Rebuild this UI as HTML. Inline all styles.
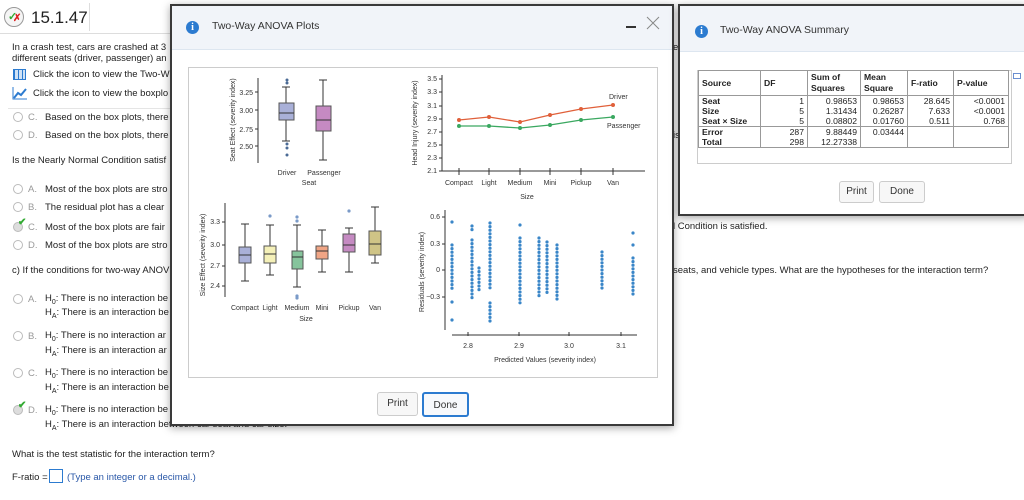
<!DOCTYPE html>
<html><head><meta charset="utf-8"><style>
*{margin:0;padding:0;box-sizing:border-box}
body{width:1024px;height:500px;overflow:hidden;background:#fff;font-family:"Liberation Sans",Arial,sans-serif;color:#222;position:relative}
.t{position:absolute;font-size:9.5px;white-space:nowrap;line-height:11px}
.r{position:absolute;width:10px;height:10px;border:1px solid #bbb;border-radius:50%;background:#fff}
.l{position:absolute;font-size:9.5px;color:#999;line-height:11px}
.dlg{position:absolute;background:#fff;border:2px solid #3a3a3a;box-shadow:0 2px 8px rgba(0,0,0,.35)}
.hd{position:absolute;left:0;right:0;top:0;background:#f1f4f9;border-bottom:1px solid #dde6f0}
.ic{position:absolute;width:13px;height:13px;border-radius:50%;background:#2c7bd0;color:#fff;font:bold 10px "Liberation Serif",serif;text-align:center;line-height:13px}
.btn{position:absolute;border:1px solid #ccc;border-radius:3px;background:#f7f7f7;font-size:10px;text-align:center;color:#333}
table{border-collapse:collapse;font-size:8.6px}
td{padding:0 3px;height:10.4px;border-left:1px solid #999;border-right:1px solid #999;line-height:10px}
sub{font-size:7px}
</style></head><body>
<div style="position:absolute;left:4px;top:7px;width:20px;height:20px;border:1px solid #999;border-radius:50%;background:#f5f5f5"></div>
<div style="position:absolute;left:8px;top:10px;font-size:11px;color:#3a3;font-weight:bold">✓</div>
<div style="position:absolute;left:13px;top:13px;font-size:10px;color:#d22;font-weight:bold">✗</div>
<div class="t" style="left:31px;top:8px;font-size:17px;line-height:20px">15.1.47</div>
<div style="position:absolute;left:89px;top:3px;width:1px;height:28px;background:#ddd"></div>
<div style="position:absolute;left:0;top:33px;width:170px;height:1px;background:#ddd"></div>
<div class="t" style="left:12px;top:42px">In a crash test, cars are crashed at 3</div>
<div class="t" style="left:12px;top:53px">different seats (driver, passenger) an</div>
<div style="position:absolute;left:13px;top:69px;width:13px;height:11px;border:1px solid #2c7bd0;background:repeating-linear-gradient(90deg,#2c7bd0 0 1px,#cfe2f6 1px 4px)"></div>
<div class="t" style="left:33px;top:69px">Click the icon to view the Two-W</div>
<svg style="position:absolute;left:12px;top:86px" width="16" height="14"><path d="M1 1V13H15" stroke="#2c7bd0" fill="none"/><path d="M2 12L6 7L9 9L14 3" stroke="#2c7bd0" stroke-width="2" fill="none"/></svg>
<div class="t" style="left:33px;top:88px">Click the icon to view the boxplo</div>
<div style="position:absolute;left:8px;top:108px;width:162px;height:1px;background:#e5e5e5"></div>
<div class="r" style="left:13px;top:112px"></div><div class="l" style="left:28px;top:112px">C.</div><div class="t" style="left:45px;top:112px">Based on the box plots, there</div>
<div class="r" style="left:13px;top:130px"></div><div class="l" style="left:28px;top:130px">D.</div><div class="t" style="left:45px;top:130px">Based on the box plots, there</div>
<div class="t" style="left:12px;top:155px">Is the Nearly Normal Condition satisf</div>
<div class="r" style="left:13px;top:184px"></div><div class="l" style="left:28px;top:184px">A.</div><div class="t" style="left:45px;top:184px">Most of the box plots are stro</div>
<div class="r" style="left:13px;top:202px"></div><div class="l" style="left:28px;top:202px">B.</div><div class="t" style="left:45px;top:202px">The residual plot has a clear</div>
<div class="r" style="left:13px;top:222px;background:#ddd"></div><div style="position:absolute;left:18px;top:217px;color:#3a3;font-size:10px;font-weight:bold">✔</div><div class="l" style="left:28px;top:222px">C.</div><div class="t" style="left:45px;top:222px">Most of the box plots are fair</div>
<div class="r" style="left:13px;top:240px"></div><div class="l" style="left:28px;top:240px">D.</div><div class="t" style="left:45px;top:240px">Most of the box plots are stro</div>
<div class="t" style="left:12px;top:265px">c) If the conditions for two-way ANOV</div>
<div class="r" style="left:13px;top:294px"></div><div class="l" style="left:28px;top:294px">A.</div><div class="t" style="left:45px;top:293px">H<sub>0</sub>: There is no interaction be</div><div class="t" style="left:45px;top:307px">H<sub>A</sub>: There is an interaction be</div>
<div class="r" style="left:13px;top:331px"></div><div class="l" style="left:28px;top:331px">B.</div><div class="t" style="left:45px;top:330px">H<sub>0</sub>: There is no interaction ar</div><div class="t" style="left:45px;top:345px">H<sub>A</sub>: There is an interaction ar</div>
<div class="r" style="left:13px;top:368px"></div><div class="l" style="left:28px;top:368px">C.</div><div class="t" style="left:45px;top:367px">H<sub>0</sub>: There is no interaction be</div><div class="t" style="left:45px;top:382px">H<sub>A</sub>: There is an interaction be</div>
<div class="r" style="left:13px;top:405px;background:#ddd"></div><div style="position:absolute;left:18px;top:400px;color:#3a3;font-size:10px;font-weight:bold">✔</div><div class="l" style="left:28px;top:405px">D.</div><div class="t" style="left:45px;top:404px">H<sub>0</sub>: There is no interaction be</div><div class="t" style="left:45px;top:419px">H<sub>A</sub>: There is an interaction between car seat and car size.</div>
<div class="t" style="left:12px;top:449px">What is the test statistic for the interaction term?</div>
<div class="t" style="left:12px;top:472px">F-ratio =</div>
<div style="position:absolute;left:49px;top:469px;width:14px;height:14px;border:1px solid #2c7bd0"></div>
<div class="t" style="left:67px;top:472px;color:#2a58a8">(Type an integer or a decimal.)</div>
<div class="t" style="left:673px;top:42px">e</div>
<div class="t" style="left:673px;top:130px">is</div>
<div class="t" style="left:673px;top:221px">l Condition is satisfied.</div>
<div class="t" style="left:673px;top:265px">seats, and vehicle types. What are the hypotheses for the interaction term?</div>

<div class="dlg" style="left:170px;top:4px;width:504px;height:422px">
<div class="hd" style="height:44px"></div>
<div class="ic" style="left:14px;top:15px">i</div>
<div class="t" style="left:40px;top:15px;font-size:10.5px;color:#333">Two-Way ANOVA Plots</div>
<div style="position:absolute;left:454px;top:20px;width:10px;height:2px;background:#333"></div>
<svg style="position:absolute;left:474px;top:10px" width="14" height="14"><path d="M1 1L13 13M13 1L1 13" stroke="#888" stroke-width="1"/></svg>
<div style="position:absolute;left:16px;top:61px;width:470px;height:311px;border:1px solid #ccc"></div>
<div class="btn" style="left:205px;top:386px;width:41px;height:24px;line-height:22px">Print</div>
<div class="btn" style="left:250px;top:386px;width:47px;height:25px;line-height:23px;border:2px solid #2c7bd0;background:#f7f9fc">Done</div>
</div>
<svg style="position:absolute;left:0;top:0" width="1024" height="500" font-family="Liberation Sans,Arial,sans-serif" font-size="7" fill="#333">
<g stroke="#333" stroke-width="1" fill="none">
<path d="M258 78V163M255 92H258M255 110H258M255 129H258M255 146H258"/>
<path d="M286 87V103M282 87H290M286 120V141M282 141H290"/>
<path d="M323 80V106M319 80H327M323 131V160M319 160H327"/>
</g>
<rect x="279" y="103" width="15" height="17" fill="#a9b0d8" stroke="#555"/><path d="M279 113H294" stroke="#333"/>
<rect x="316" y="106" width="15" height="25" fill="#c58ac2" stroke="#555"/><path d="M316 120H331" stroke="#333"/>
<g fill="#4a6a95"><circle cx="287" cy="80" r="1.5"/><circle cx="287" cy="83" r="1.5"/><circle cx="287" cy="144" r="1.5"/><circle cx="287" cy="148" r="1.5"/><circle cx="287" cy="155" r="1.5"/></g>
<g text-anchor="end"><text x="253" y="95">3.25</text><text x="253" y="113">3.00</text><text x="253" y="132">2.75</text><text x="253" y="149">2.50</text></g>
<text x="287" y="175" text-anchor="middle">Driver</text><text x="324" y="175" text-anchor="middle">Passenger</text><text x="309" y="185" text-anchor="middle">Seat</text>
<text transform="translate(235 120) rotate(-90)" text-anchor="middle">Seat Effect (severity index)</text>
<g stroke="#333" fill="none"><path d="M442 75V171H645"/>
<path d="M439 79H442M439 92H442M439 106H442M439 119H442M439 132H442M439 145H442M439 158H442M439 171H442M459 168V175M489 168V175M520 168V175M550 168V175M581 168V175M613 168V175"/></g>
<g text-anchor="end"><text x="437" y="81">3.5</text><text x="437" y="94">3.3</text><text x="437" y="108">3.1</text><text x="437" y="121">2.9</text><text x="437" y="134">2.7</text><text x="437" y="147">2.5</text><text x="437" y="160">2.3</text><text x="437" y="173">2.1</text></g>
<polyline points="459,120 489,117 520,122 550,115 581,109 613,105" fill="none" stroke="#e0603a" stroke-width="1.3"/>
<polyline points="459,126 489,126 520,128 550,125 581,120 613,117" fill="none" stroke="#3aa860" stroke-width="1.3"/>
<g fill="#e0603a"><circle cx="459" cy="120" r="2"/><circle cx="489" cy="117" r="2"/><circle cx="520" cy="122" r="2"/><circle cx="550" cy="115" r="2"/><circle cx="581" cy="109" r="2"/><circle cx="613" cy="105" r="2"/></g>
<g fill="#3aa860"><circle cx="459" cy="126" r="2"/><circle cx="489" cy="126" r="2"/><circle cx="520" cy="128" r="2"/><circle cx="550" cy="125" r="2"/><circle cx="581" cy="120" r="2"/><circle cx="613" cy="117" r="2"/></g>
<text x="609" y="99">Driver</text><text x="607" y="128">Passenger</text>
<g text-anchor="middle"><text x="459" y="185">Compact</text><text x="489" y="185">Light</text><text x="520" y="185">Medium</text><text x="550" y="185">Mini</text><text x="581" y="185">Pickup</text><text x="613" y="185">Van</text><text x="527" y="199">Size</text></g>
<text transform="translate(417 123) rotate(-90)" text-anchor="middle">Head Injury (severity index)</text>
<g stroke="#333" fill="none"><path d="M225 203V297M222 222H225M222 245H225M222 266H225M222 286H225"/></g>
<g text-anchor="end"><text x="220" y="224">3.3</text><text x="220" y="247">3.0</text><text x="220" y="268">2.7</text><text x="220" y="288">2.4</text></g>
<text transform="translate(205 255) rotate(-90)" text-anchor="middle">Size Effect (severity index)</text>
<g stroke="#333" fill="none">
<path d="M245 224V281M241 224H249M241 281H249"/>
<path d="M270 225V275M266 225H274M266 275H274"/>
<path d="M297 225V287M293 225H301M293 287H301"/>
<path d="M322 230V272M318 230H326M318 272H326"/>
<path d="M349 228V272M345 228H353M345 272H353"/>
<path d="M375 207V263M371 207H379M371 263H379"/>
</g>
<rect x="239" y="247" width="12" height="16" fill="#a9b0d8" stroke="#555"/><path d="M239 255H251" stroke="#333"/>
<rect x="264" y="246" width="12" height="17" fill="#f4f0b8" stroke="#555"/><path d="M264 254H276" stroke="#333"/>
<rect x="292" y="251" width="11" height="18" fill="#86c49c" stroke="#555"/><path d="M292 257H303" stroke="#333"/>
<rect x="316" y="246" width="12" height="13" fill="#f0a585" stroke="#555"/><path d="M316 251H328" stroke="#333"/>
<rect x="343" y="234" width="12" height="18" fill="#c58ac2" stroke="#555"/><path d="M343 245H355" stroke="#333"/>
<rect x="369" y="231" width="12" height="24" fill="#cfc486" stroke="#555"/><path d="M369 244H381" stroke="#333"/>
<g fill="#7a9ac8"><circle cx="270" cy="216" r="1.6"/><circle cx="297" cy="217" r="1.6"/><circle cx="297" cy="221" r="1.6"/><circle cx="297" cy="296" r="1.6"/><circle cx="297" cy="298" r="1.6"/><circle cx="349" cy="211" r="1.6"/></g>
<g text-anchor="middle"><text x="245" y="310">Compact</text><text x="270" y="310">Light</text><text x="297" y="310">Medium</text><text x="322" y="310">Mini</text><text x="349" y="310">Pickup</text><text x="375" y="310">Van</text><text x="306" y="321">Size</text></g>
<g stroke="#333" fill="none"><path d="M445 210V330M452 335H637M442 217H445M442 244H445M442 270H445M442 297H445M468 332V336M519 332V336M569 332V336M621 332V336"/></g>
<g text-anchor="end"><text x="440" y="219">0.6</text><text x="440" y="246">0.3</text><text x="440" y="272">0</text><text x="440" y="299">−0.3</text></g>
<g text-anchor="middle"><text x="468" y="348">2.8</text><text x="519" y="348">2.9</text><text x="569" y="348">3.0</text><text x="621" y="348">3.1</text><text x="545" y="362">Predicted Values (severity index)</text></g>
<text transform="translate(424 272) rotate(-90)" text-anchor="middle">Residuals (severity index)</text>
<g stroke="#3a86c8" stroke-width="3.2" stroke-linecap="round" stroke-dasharray="0 3.6" fill="none">
<path d="M452 222V224M452 245V290M472 226V233M472 240V298M479 268V293M490 223V290M490 303V321M520 238V303M539 238V298M547 242V293M557 245V302M602 252V290M633 258V294"/>
</g>
<g fill="#3a86c8"><circle cx="452" cy="302" r="1.6"/><circle cx="452" cy="320" r="1.6"/><circle cx="520" cy="225" r="1.6"/><circle cx="633" cy="233" r="1.6"/><circle cx="633" cy="245" r="1.6"/></g>
</svg>

<div class="dlg" style="left:678px;top:4px;width:350px;height:212px">
<div class="hd" style="height:46px"></div>
<div class="ic" style="left:15px;top:19px">i</div>
<div class="t" style="left:40px;top:19px;font-size:10.5px;color:#333">Two-Way ANOVA Summary</div>
<div style="position:absolute;left:17px;top:64px;width:315px;height:94px;border:1px solid #ccc"></div>
<div style="position:absolute;left:333px;top:67px;width:8px;height:6px;border:1px solid #6b8fd0"></div>
<div class="btn" style="left:159px;top:175px;width:35px;height:22px;line-height:20px">Print</div>
<div class="btn" style="left:199px;top:175px;width:46px;height:22px;line-height:20px">Done</div>
</div>
<table style="position:absolute;left:698px;top:70px;width:311px;border:1px solid #999">
<tr style="font-weight:bold;height:25px;border-bottom:1px solid #999"><td style="width:62px;height:25px">Source</td><td style="width:47px">DF</td><td style="width:53px;line-height:11px">Sum of<br>Squares</td><td style="width:47px;line-height:11px">Mean<br>Square</td><td style="width:46px">F-ratio</td><td>P-value</td></tr>
<tr><td><b>Seat</b></td><td align="right">1</td><td align="right">0.98653</td><td align="right">0.98653</td><td align="right">28.645</td><td align="right">&lt;0.0001</td></tr>
<tr><td><b>Size</b></td><td align="right">5</td><td align="right">1.31434</td><td align="right">0.26287</td><td align="right">7.633</td><td align="right">&lt;0.0001</td></tr>
<tr style="border-bottom:1px solid #999"><td><b>Seat × Size</b></td><td align="right">5</td><td align="right">0.08802</td><td align="right">0.01760</td><td align="right">0.511</td><td align="right">0.768</td></tr>
<tr><td><b>Error</b></td><td align="right">287</td><td align="right">9.88449</td><td align="right">0.03444</td><td></td><td></td></tr>
<tr><td><b>Total</b></td><td align="right">298</td><td align="right">12.27338</td><td></td><td></td><td></td></tr>
</table>
</body></html>
